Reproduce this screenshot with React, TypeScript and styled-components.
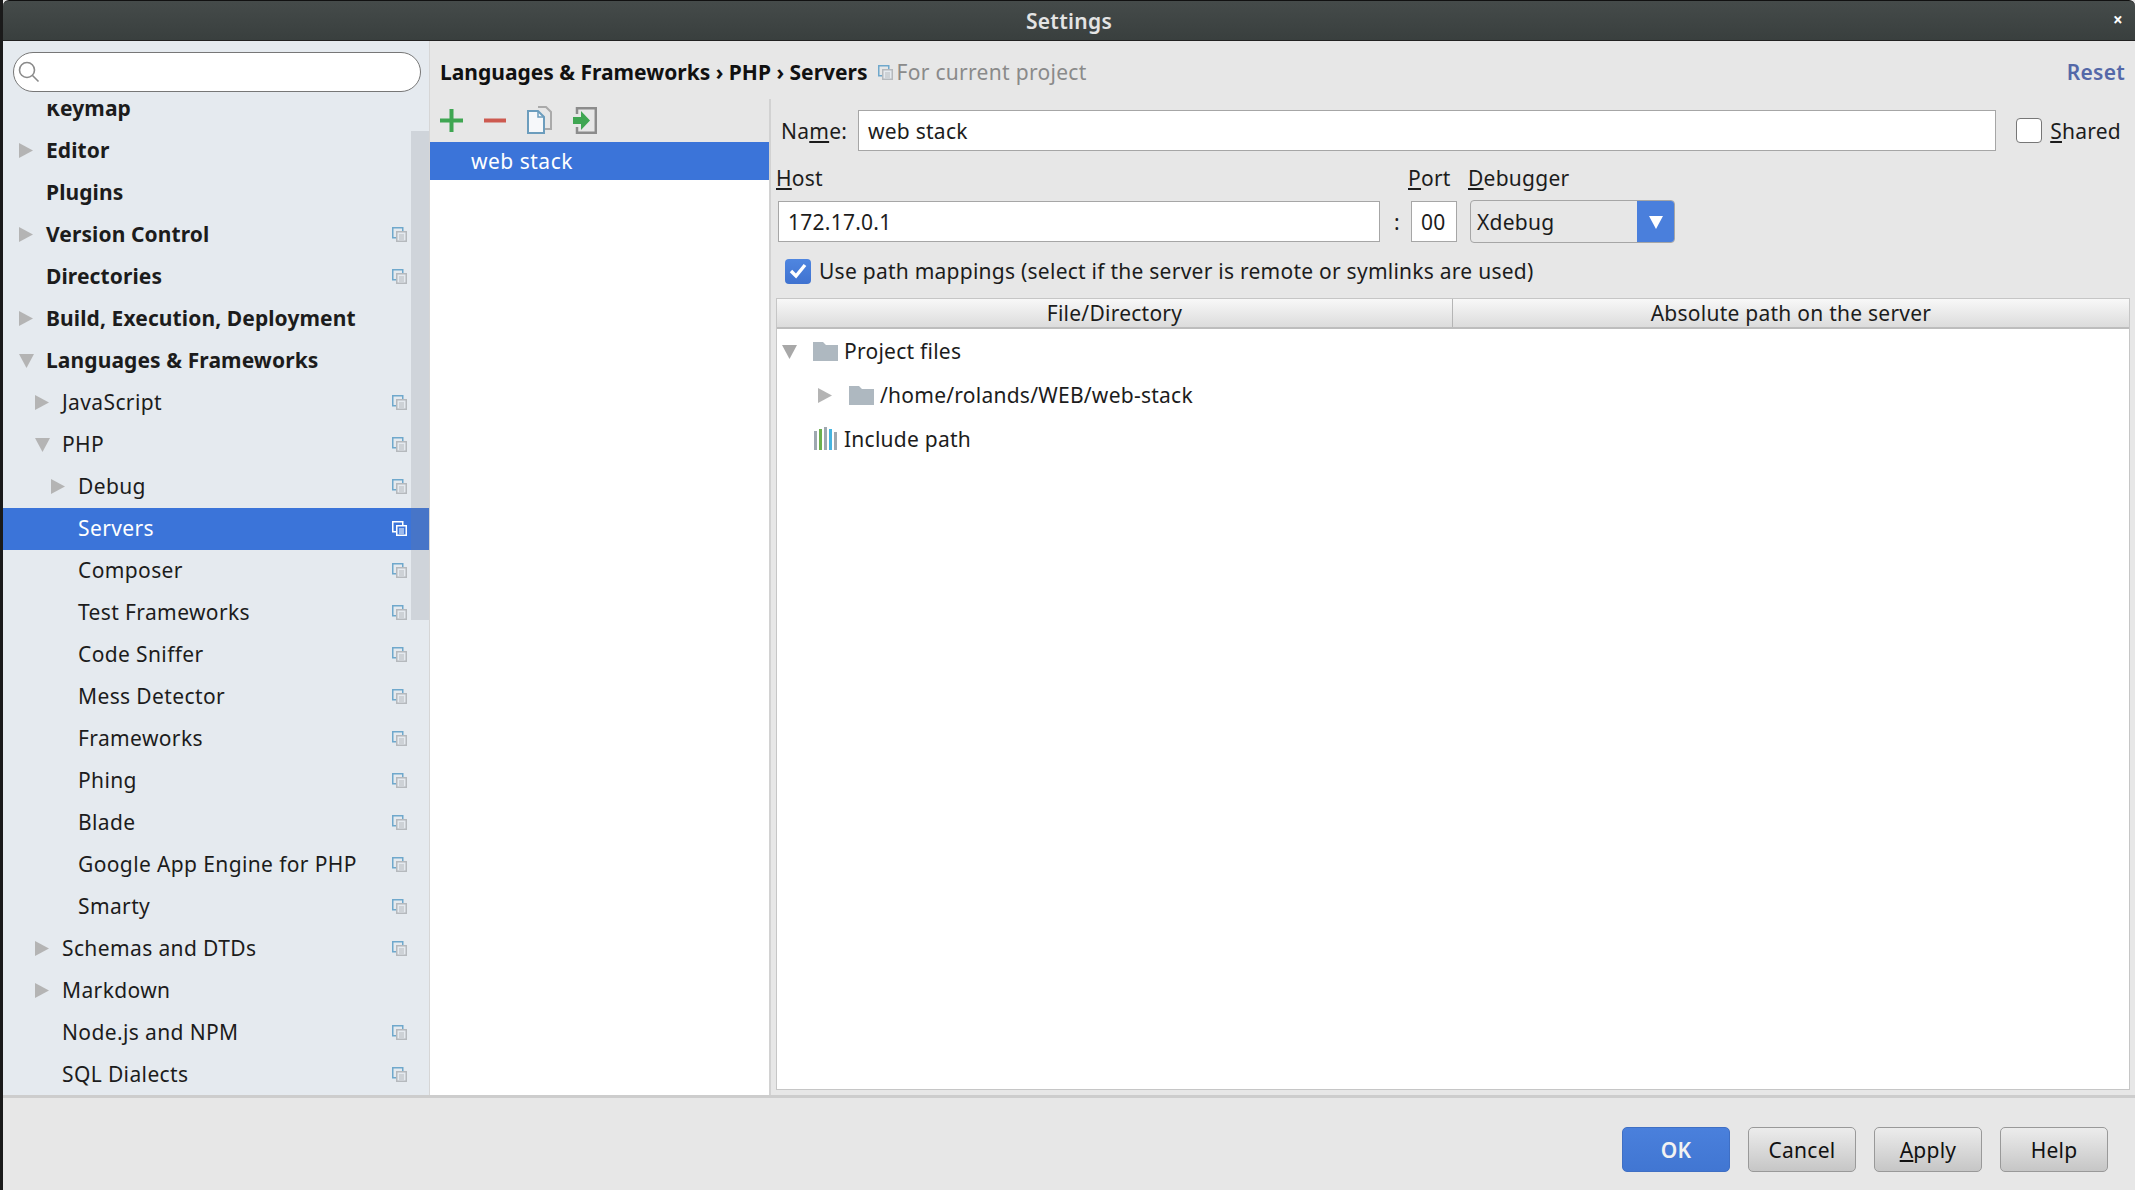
import React from "react";
import styled, { createGlobalStyle } from "styled-components";

const GlobalStyle = createGlobalStyle`
    html, body {
        margin: 0;
        padding: 0;
        background: #1c1c1c;
    }
    * {
        box-sizing: border-box;
    }
`

const Window = styled.div`
    width: 2135px;
    height: 1190px;
    display: flex;
    flex-direction: column;
    overflow: hidden;
    border-left: 3px solid #1a1a1a;
    font-family: "Noto Sans", sans-serif;
    font-size: 21px;
    letter-spacing: 0.25px;
    color: #1c1c1c;
    background: #e7e7e7;
`
const TitleBar = styled.div`
    position: relative;
    flex: 0 0 41px;
    display: flex;
    align-items: center;
    justify-content: center;
    border-top: 1px solid #111;
    border-bottom: 1px solid #222;
    border-radius: 6px 6px 0 0;
    background: linear-gradient(#454b4a, #393f3e);
    color: #e4e4e4;
    font-weight: 600;
    letter-spacing: 0.3px;
`
const CloseMark = styled.span`
    position: absolute;
    right: 12px;
    top: 7px;
    color: #fff;
    font-size: 17px;
    font-weight: 700;
`
const Body = styled.div`
    flex: 1;
    min-height: 0;
    display: flex;
    border-bottom: 3px solid #cdcdcd;
`
const Sidebar = styled.div`
    position: relative;
    flex: 0 0 427px;
    display: flex;
    flex-direction: column;
    background: #e5eaef;
    border-right: 1px solid #d6d6d6;
`
const SearchWrap = styled.div`
    flex: 0 0 62px;
    padding: 11px 8px 12px 10px;
`
const SearchBox = styled.div`
    height: 40px;
    display: flex;
    align-items: center;
    padding-left: 3px;
    background: #fff;
    border: 1px solid #777;
    border-radius: 20px;
`
const TreeClip = styled.div`
    flex: 1;
    min-height: 0;
    overflow: hidden;
`
const Tree = styled.div`
    margin-top: -16px;
`
const Row = styled.div<{ $level: number; $selected?: boolean; $bold?: boolean }>`
    height: 42px;
    display: flex;
    align-items: center;
    padding: 0 22px 2px ${p => 16 + p.$level * 16}px;
    background: ${p => (p.$selected ? "#3b74d9" : "transparent")};
    color: ${p => (p.$selected ? "#fff" : "#1c1c1c")};
    font-weight: ${p => (p.$bold ? 700 : 400)};
    letter-spacing: ${p => (p.$bold ? "0.1px" : "0.38px")};
`
const ArrowSlot = styled.span`
    flex: 0 0 27px;
    display: flex;
    align-items: center;
`
const RowLabel = styled.span`
    flex: 1;
    white-space: nowrap;
`
const ScrollThumb = styled.div`
    position: absolute;
    right: 0;
    top: 90px;
    width: 18px;
    height: 489px;
    background: rgba(120, 125, 135, 0.2);
`
const Main = styled.div`
    flex: 1;
    min-width: 0;
    display: flex;
    flex-direction: column;
`
const Breadcrumb = styled.div`
    flex: 0 0 58px;
    display: flex;
    align-items: center;
    padding: 4px 10px 0 10px;
    white-space: nowrap;
`
const Crumbs = styled.span`
    font-weight: 700;
    color: #111;
    letter-spacing: 0;
`
const ProjectHint = styled.span`
    display: flex;
    align-items: center;
    gap: 3px;
    margin-left: 11px;
    color: #8a8a8a;
    letter-spacing: 0.3px;
`
const ResetLink = styled.span`
    margin-left: auto;
    color: #5468a8;
    font-weight: 600;
`
const Content = styled.div`
    flex: 1;
    min-height: 0;
    display: flex;
`
const ListPane = styled.div`
    flex: 0 0 341px;
    display: flex;
    flex-direction: column;
    border-right: 2px solid #d2d2d2;
`
const ListTools = styled.div`
    flex: 0 0 43px;
    display: flex;
    align-items: center;
    gap: 21px;
    padding: 0 0 1px 10px;
`
const ListBody = styled.div`
    flex: 1;
    background: #fff;
`
const ListItem = styled.div`
    height: 38px;
    display: flex;
    align-items: center;
    padding-left: 41px;
    background: #3b74d9;
    color: #fff;
    letter-spacing: 0.5px;
`
const Details = styled.div`
    flex: 1;
    min-width: 0;
    display: flex;
    flex-direction: column;
    padding: 11px 5px 5px 5px;
`
const NameRow = styled.div`
    display: flex;
    align-items: center;
    height: 41px;
    padding-left: 5px;
`
const NameLabel = styled.span`
    flex: 0 0 77px;
`
const TextInput = styled.div<{ $w?: number }>`
    height: 41px;
    display: flex;
    align-items: center;
    padding: 0 9px;
    background: #fff;
    border: 1px solid #a6a6a6;
    ${p => (p.$w ? `width: ${p.$w}px;` : "flex: 1;")}
`
const SharedBox = styled.span`
    width: 26px;
    height: 25px;
    margin: 0 8px 0 20px;
    background: #fff;
    border: 1px solid #777;
    border-radius: 4px;
`
const SharedLabel = styled.span`
    margin-right: 9px;
`
const ServerGrid = styled.div`
    display: grid;
    grid-template-columns: 605px 28px 46px 218px;
    row-gap: 8px;
    margin-top: 13px;
    padding-left: 2px;
    align-items: center;
`
const FieldCaption = styled.span<{ $shift?: number }>`
    margin-left: ${p => p.$shift ?? 0}px;
    white-space: nowrap;
`
const Colon = styled.span`
    text-align: center;
`
const Select = styled.div`
    margin-left: 13px;
    height: 43px;
    display: flex;
    align-items: center;
    justify-content: space-between;
    padding-left: 6px;
    border: 1px solid #a6a6a6;
    border-radius: 4px;
    overflow: hidden;
`
const SelectButton = styled.span`
    width: 37px;
    height: 43px;
    display: flex;
    align-items: center;
    justify-content: center;
    background: #4a7fdc;
`
const MappingRow = styled.div`
    display: flex;
    align-items: center;
    gap: 8px;
    height: 40px;
    margin-top: 8px;
    padding-left: 9px;
`
const CheckBox = styled.span`
    width: 26px;
    height: 25px;
    display: flex;
    align-items: center;
    justify-content: center;
    border-radius: 4px;
    background: linear-gradient(#4f86e0, #3f72d0);
`
const Table = styled.div`
    flex: 1;
    min-height: 0;
    display: flex;
    flex-direction: column;
    margin-top: 7px;
    border: 1px solid #c6c6c6;
    background: #fff;
`
const TableHead = styled.div`
    flex: 0 0 29px;
    display: grid;
    grid-template-columns: 675px 1fr;
    border-bottom: 2px solid #bdbdbd;
    background: linear-gradient(#f8f8f8, #dcdcdc);
`
const HeadCell = styled.div`
    display: flex;
    align-items: center;
    justify-content: center;
    border-left: 1px solid #b5b5b5;
    &:first-child {
        border-left: 0;
    }
`
const TableBody = styled.div`
    padding-top: 0;
`
const PathRow = styled.div<{ $indent: number }>`
    height: 44px;
    display: flex;
    align-items: center;
    gap: 6px;
    padding-left: ${p => p.$indent}px;
`
const PathArrow = styled.span`
    flex: 0 0 25px;
    display: flex;
    align-items: center;
`
const Footer = styled.div`
    flex: 0 0 92px;
    display: flex;
    justify-content: flex-end;
    gap: 18px;
    padding: 29px 27px 0 0;
`
const Button = styled.div<{ $primary?: boolean }>`
    width: 108px;
    height: 45px;
    display: flex;
    align-items: center;
    justify-content: center;
    border-radius: 5px;
    border: 1px solid ${p => (p.$primary ? "#3f6fc4" : "#999")};
    background: ${p =>
        p.$primary
            ? "linear-gradient(#4a80dc, #4176d2)"
            : "linear-gradient(#ececec, #c6c6c6)"};
    color: ${p => (p.$primary ? "#f2f2f2" : "#111")};
    font-weight: ${p => (p.$primary ? 600 : 400)};
`

const Arrow: React.FC<{ open?: boolean; color?: string }> = ({ open, color = "#b4b4b4" }) => (
    <svg width="15" height="15" viewBox="0 0 15 15">
        <path d={open ? "M0 1h15L7.5 15z" : "M0 0l14 7.5L0 15z"} fill={color} />
    </svg>
)

const ProjectIcon: React.FC<{ light?: boolean }> = ({ light }) => {
    const back = light ? "#fff" : "#6fa8cc"
    const front = light ? "#fff" : "#b5b9bd"
    const fill = light ? "#3b74d9" : "#e5eaef"
    return (
        <svg width="15" height="15" viewBox="0 0 15 15">
            <rect x="0.75" y="0.75" width="10" height="10" fill="none" stroke={back} strokeWidth="1.5" />
            <rect x="4" y="4" width="11" height="11" fill={front} />
            <rect x="5.5" y="5.5" width="8" height="8" fill={fill} />
            <path d="M7 8h5M7 10h5M7 12h5" stroke={front} strokeWidth="1" />
        </svg>
    )
}

const SearchIcon = () => (
    <svg width="24" height="24" viewBox="0 0 24 24" fill="none" stroke="#8a8a8a" strokeWidth="1.6">
        <circle cx="10" cy="10" r="7.5" />
        <path d="M15.5 15.5l6 6" />
    </svg>
)

const AddIcon = () => (
    <svg width="23" height="23" viewBox="0 0 23 23">
        <path d="M0 11.5h23M11.5 0v23" stroke="#3fa652" strokeWidth="4" />
    </svg>
)
const RemoveIcon = () => (
    <svg width="22" height="23" viewBox="0 0 22 23">
        <path d="M0 11.5h22" stroke="#cd5a50" strokeWidth="4" />
    </svg>
)
const CopyIcon = () => (
    <svg width="25" height="28" viewBox="0 0 25 28">
        <path d="M11 1h8l5 5v17h-6" fill="#e7e7e7" stroke="#aaa" strokeWidth="2" />
        <path d="M1 5h10l6 6v16H1z" fill="#f6f8fa" stroke="#6c9dbd" strokeWidth="2" />
        <path d="M11 5v6h6" fill="none" stroke="#6c9dbd" strokeWidth="1.5" />
    </svg>
)
const ImportIcon = () => (
    <svg width="24" height="27" viewBox="0 0 24 27">
        <path d="M4 7V1.2h18.8v24.6H4V20" fill="none" stroke="#8c8c8c" strokeWidth="2.5" />
        <path d="M0 10h8V4l9 9.5L8 23v-6H0z" fill="#3fa652" />
    </svg>
)
const FolderIcon = () => (
    <svg width="25" height="19" viewBox="0 0 25 19">
        <path d="M0 0h10l3 3h12v16H0z" fill="#aeb8c0" />
    </svg>
)
const LibraryIcon = () => (
    <svg width="25" height="24" viewBox="0 0 25 24">
        <path d="M1 4h3v19H1z" fill="#9ea8b0" />
        <path d="M6 2h3v21H6z" fill="#6cb04f" />
        <path d="M11 0h3v23h-3z" fill="#9ea8b0" />
        <path d="M16 2h3v21h-3z" fill="#46b4e0" />
        <path d="M21 5h3v18h-3z" fill="#9ea8b0" />
    </svg>
)

interface TreeItem {
    label: string
    level: number
    arrow?: "open" | "closed"
    bold?: boolean
    project?: boolean
    selected?: boolean
}

const treeItems: TreeItem[] = [
    { label: "Keymap", level: 0, bold: true },
    { label: "Editor", level: 0, bold: true, arrow: "closed" },
    { label: "Plugins", level: 0, bold: true },
    { label: "Version Control", level: 0, bold: true, arrow: "closed", project: true },
    { label: "Directories", level: 0, bold: true, project: true },
    { label: "Build, Execution, Deployment", level: 0, bold: true, arrow: "closed" },
    { label: "Languages & Frameworks", level: 0, bold: true, arrow: "open" },
    { label: "JavaScript", level: 1, arrow: "closed", project: true },
    { label: "PHP", level: 1, arrow: "open", project: true },
    { label: "Debug", level: 2, arrow: "closed", project: true },
    { label: "Servers", level: 2, project: true, selected: true },
    { label: "Composer", level: 2, project: true },
    { label: "Test Frameworks", level: 2, project: true },
    { label: "Code Sniffer", level: 2, project: true },
    { label: "Mess Detector", level: 2, project: true },
    { label: "Frameworks", level: 2, project: true },
    { label: "Phing", level: 2, project: true },
    { label: "Blade", level: 2, project: true },
    { label: "Google App Engine for PHP", level: 2, project: true },
    { label: "Smarty", level: 2, project: true },
    { label: "Schemas and DTDs", level: 1, arrow: "closed", project: true },
    { label: "Markdown", level: 1, arrow: "closed" },
    { label: "Node.js and NPM", level: 1, project: true },
    { label: "SQL Dialects", level: 1, project: true },
]

const App: React.FC = () => {
    return <>
        <GlobalStyle />
        <Window>
            <TitleBar>
                Settings
                <CloseMark>×</CloseMark>
            </TitleBar>
            <Body>
                <Sidebar>
                    <SearchWrap>
                        <SearchBox><SearchIcon /></SearchBox>
                    </SearchWrap>
                    <TreeClip>
                        <Tree>
                            {treeItems.map(item => (
                                <Row key={item.label} $level={item.level} $bold={item.bold} $selected={item.selected}>
                                    <ArrowSlot>
                                        {item.arrow && <Arrow open={item.arrow === "open"} />}
                                    </ArrowSlot>
                                    <RowLabel>{item.label}</RowLabel>
                                    {item.project && <ProjectIcon light={item.selected} />}
                                </Row>
                            ))}
                        </Tree>
                    </TreeClip>
                    <ScrollThumb />
                </Sidebar>
                <Main>
                    <Breadcrumb>
                        <Crumbs>Languages &amp; Frameworks › PHP › Servers</Crumbs>
                        <ProjectHint><ProjectIcon />For current project</ProjectHint>
                        <ResetLink>Reset</ResetLink>
                    </Breadcrumb>
                    <Content>
                        <ListPane>
                            <ListTools>
                                <AddIcon />
                                <RemoveIcon />
                                <CopyIcon />
                                <ImportIcon />
                            </ListTools>
                            <ListBody>
                                <ListItem>web stack</ListItem>
                            </ListBody>
                        </ListPane>
                        <Details>
                            <NameRow>
                                <NameLabel>Na<u>m</u>e:</NameLabel>
                                <TextInput>web stack</TextInput>
                                <SharedBox />
                                <SharedLabel><u>S</u>hared</SharedLabel>
                            </NameRow>
                            <ServerGrid>
                                <FieldCaption $shift={-2}><u>H</u>ost</FieldCaption>
                                <span />
                                <FieldCaption $shift={-3}><u>P</u>ort</FieldCaption>
                                <FieldCaption $shift={11}><u>D</u>ebugger</FieldCaption>
                                <TextInput $w={602}>172.17.0.1</TextInput>
                                <Colon>:</Colon>
                                <TextInput $w={46}>00</TextInput>
                                <Select>
                                    Xdebug
                                    <SelectButton>
                                        <svg width="14" height="14" viewBox="0 0 14 14">
                                            <path d="M0 1h14L7 14z" fill="#fff" />
                                        </svg>
                                    </SelectButton>
                                </Select>
                            </ServerGrid>
                            <MappingRow>
                                <CheckBox>
                                    <svg width="18" height="16" viewBox="0 0 18 16" fill="none" stroke="#fff" strokeWidth="3.4">
                                        <path d="M2 8l5 5 9-11" />
                                    </svg>
                                </CheckBox>
                                Use path mappings (select if the server is remote or symlinks are used)
                            </MappingRow>
                            <Table>
                                <TableHead>
                                    <HeadCell>File/Directory</HeadCell>
                                    <HeadCell>Absolute path on the server</HeadCell>
                                </TableHead>
                                <TableBody>
                                    <PathRow $indent={5}>
                                        <PathArrow><Arrow open color="#a8a8a8" /></PathArrow>
                                        <FolderIcon />
                                        Project files
                                    </PathRow>
                                    <PathRow $indent={41}>
                                        <PathArrow><Arrow /></PathArrow>
                                        <FolderIcon />
                                        /home/rolands/WEB/web-stack
                                    </PathRow>
                                    <PathRow $indent={5}>
                                        <PathArrow />
                                        <LibraryIcon />
                                        Include path
                                    </PathRow>
                                </TableBody>
                            </Table>
                        </Details>
                    </Content>
                </Main>
            </Body>
            <Footer>
                <Button $primary>OK</Button>
                <Button>Cancel</Button>
                <Button><span><u>A</u>pply</span></Button>
                <Button>Help</Button>
            </Footer>
        </Window>
    </>
}

export default App;
